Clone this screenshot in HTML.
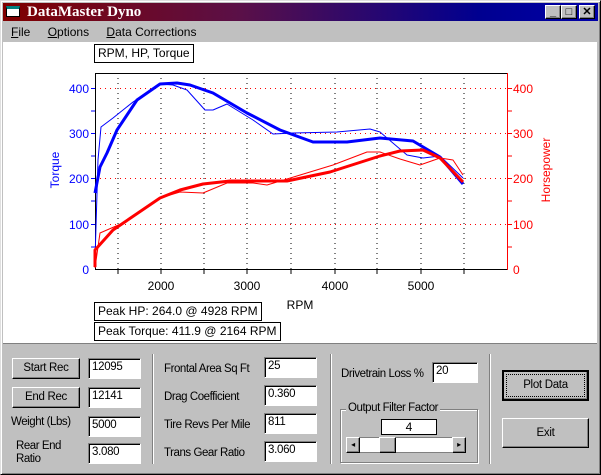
<!DOCTYPE html>
<html><head><style>
*{margin:0;padding:0;box-sizing:border-box}
body{width:601px;height:475px;background:#c0c0c0;font-family:"Liberation Sans",Arial,sans-serif;font-size:12px;position:relative;overflow:hidden}
.a{position:absolute}
.win{left:0;top:0;width:601px;height:475px;border:1px solid;border-color:#dfdfdf #000 #000 #dfdfdf;box-shadow:inset 1px 1px #fff,inset -1px -1px #808080}
.title{left:3px;top:3px;width:595px;height:18px;background:linear-gradient(90deg,#800000,#5a1048 40%,#000090 80%,#0000a8);color:#fff;font-family:"Liberation Serif",serif;font-weight:bold;font-size:15px;line-height:18px;padding-left:24px}
.tb{top:5px;width:16px;height:14px;background:#c0c0c0;border:1px solid;border-color:#fff #000 #000 #fff;box-shadow:inset -1px -1px #808080;font-size:11px;font-weight:bold;text-align:center;line-height:12px;color:#000}
.menu span{margin-right:14px}
.tx{background:#fff;border:1px solid;border-color:#808080 #fff #fff #808080;box-shadow:inset 1px 1px #000;font-size:11.5px;letter-spacing:-0.3px;padding:2px 0 0 3px;height:21px}
.btn{background:#c0c0c0;border:1px solid;border-color:#fff #000 #000 #fff;box-shadow:inset -1px -1px #808080;text-align:center;font-size:11.5px;letter-spacing:-0.3px}
.lbl{font-size:11.5px;letter-spacing:-0.45px;white-space:nowrap}
.vl{width:2px;border-left:1px solid #808080;border-right:1px solid #fff}
.box{border:1px solid #000;background:#fff;padding:0 3px;font-size:12px;line-height:17px}
</style></head><body>
<div class="a win"></div>
<div class="a title">DataMaster Dyno</div>
<div class="a" style="left:6px;top:6px;width:14px;height:11px;background:#fff;border:1px solid #000;border-top:3px solid #008080"></div>
<div class="a tb" style="left:545px">_</div>
<div class="a tb" style="left:561px">□</div>
<div class="a tb" style="left:579px">✕</div>
<div class="a menu" style="left:11px;top:25px;font-size:12px"><span><u>F</u>ile</span> <span><u>O</u>ptions</span> <span><u>D</u>ata Corrections</span></div>
<div class="a" style="left:3px;top:42px;width:594px;height:302px;background:#fff"></div>
<div class="a box" style="left:94px;top:44px">RPM, HP, Torque</div>
<svg class="a" style="left:0;top:0" width="601" height="345">
<g stroke="#000" stroke-dasharray="1,4" stroke-width="1">
<line x1="118" y1="73" x2="118" y2="269"/><line x1="161" y1="73" x2="161" y2="269"/><line x1="204" y1="73" x2="204" y2="269"/><line x1="247" y1="73" x2="247" y2="269"/><line x1="291" y1="73" x2="291" y2="269"/><line x1="335" y1="73" x2="335" y2="269"/><line x1="377" y1="73" x2="377" y2="269"/><line x1="421" y1="73" x2="421" y2="269"/><line x1="464" y1="73" x2="464" y2="269"/>
</g>
<g stroke="#f00" stroke-dasharray="1,4">
<line x1="95" y1="88.5" x2="507" y2="88.5"/><line x1="95" y1="133.5" x2="507" y2="133.5"/><line x1="95" y1="178.5" x2="507" y2="178.5"/><line x1="95" y1="224.5" x2="507" y2="224.5"/>
</g>
<rect x="95.5" y="73.5" width="412" height="196" fill="none" stroke="#000"/>
<line x1="507.5" y1="73" x2="507.5" y2="270" stroke="#f00"/>
<g stroke="#000"><line x1="118" y1="269" x2="118" y2="274"/><line x1="161" y1="269" x2="161" y2="274"/><line x1="204" y1="269" x2="204" y2="274"/><line x1="247" y1="269" x2="247" y2="274"/><line x1="291" y1="269" x2="291" y2="274"/><line x1="335" y1="269" x2="335" y2="274"/><line x1="377" y1="269" x2="377" y2="274"/><line x1="421" y1="269" x2="421" y2="274"/><line x1="464" y1="269" x2="464" y2="274"/></g>
<g stroke="#00f"><line x1="91" y1="88.5" x2="95" y2="88.5"/><line x1="91" y1="111" x2="95" y2="111"/><line x1="91" y1="133.5" x2="95" y2="133.5"/><line x1="91" y1="156" x2="95" y2="156"/><line x1="91" y1="178.5" x2="95" y2="178.5"/><line x1="91" y1="201" x2="95" y2="201"/><line x1="91" y1="224.5" x2="95" y2="224.5"/><line x1="91" y1="247" x2="95" y2="247"/></g>
<g stroke="#f00"><line x1="507" y1="88.5" x2="512" y2="88.5"/><line x1="507" y1="111" x2="512" y2="111"/><line x1="507" y1="133.5" x2="512" y2="133.5"/><line x1="507" y1="156" x2="512" y2="156"/><line x1="507" y1="178.5" x2="512" y2="178.5"/><line x1="507" y1="201" x2="512" y2="201"/><line x1="507" y1="224.5" x2="512" y2="224.5"/><line x1="507" y1="247" x2="512" y2="247"/></g>
<g fill="#00f" font-size="12" font-family="Liberation Sans" text-anchor="end"><text x="89" y="93">400</text><text x="89" y="138">300</text><text x="89" y="183">200</text><text x="89" y="229">100</text><text x="89" y="274">0</text></g>
<g fill="#f00" font-size="12" font-family="Liberation Sans"><text x="513" y="93">400</text><text x="513" y="138">300</text><text x="513" y="183">200</text><text x="513" y="229">100</text><text x="513" y="274">0</text></g>
<g font-size="12" font-family="Liberation Sans" text-anchor="middle"><text x="161" y="290">2000</text><text x="247" y="290">3000</text><text x="335" y="290">4000</text><text x="421" y="290">5000</text><text x="300" y="309">RPM</text></g>
<text transform="translate(59,170) rotate(-90)" fill="#00f" font-size="12" font-family="Liberation Sans" text-anchor="middle">Torque</text>
<text transform="translate(550,170) rotate(-90)" fill="#f00" font-size="12" font-family="Liberation Sans" text-anchor="middle">Horsepower</text>
<g fill="none" stroke-linejoin="round">
<polyline stroke="#00f" stroke-width="1" points="95,260 98,160 101,127 113,118 133,102 160,84 173,85 187,90 205,110 213,110 227,104 253,120 273,134 293,133 337,132 370,129 380,132 407,155 423,158 440,156 463,178"/>
<polyline stroke="#00f" stroke-width="3" points="95,193 100,167 107,153 117,130 137,100 160,84 177,83 190,85 213,93 247,113 280,130 313,142 347,142 380,138 413,141 440,157 463,184"/>
<polyline stroke="#f00" stroke-width="1" points="95,268 100,233 123,223 160,198 180,192 203,193 227,183 253,183 267,185 287,179 333,165 367,152 380,152 400,159 420,165 440,158 453,160 463,175"/>
<polyline stroke="#f00" stroke-width="3" points="95,267 95,250 113,230 160,198 180,190 203,184 230,181 287,181 330,172 380,156 400,151 423,150 440,158 463,182"/>
</g>
</svg>
<div class="a box" style="left:94px;top:302px">Peak HP: 264.0 @ 4928 RPM</div>
<div class="a box" style="left:94px;top:322px">Peak Torque: 411.9 @ 2164 RPM</div>
<div class="a" style="left:3px;top:343px;width:594px;height:1px;background:#808080"></div>

<div class="a btn" style="left:12px;top:358px;width:68px;height:21px;line-height:19px">Start Rec</div>
<div class="a btn" style="left:12px;top:387px;width:68px;height:21px;line-height:19px">End Rec</div>
<div class="a lbl" style="left:11px;top:416px">Weight (Lbs)</div>
<div class="a lbl" style="left:16px;top:440px;line-height:13px">Rear End<br>Ratio</div>
<div class="a tx" style="left:88px;top:358px;width:53px">12095</div>
<div class="a tx" style="left:88px;top:387px;width:53px">12141</div>
<div class="a tx" style="left:88px;top:416px;width:53px">5000</div>
<div class="a tx" style="left:88px;top:443px;width:53px">3.080</div>
<div class="a vl" style="left:152px;top:354px;height:110px"></div>
<div class="a lbl" style="left:164px;top:363px">Frontal Area Sq Ft</div>
<div class="a lbl" style="left:164px;top:391px">Drag Coefficient</div>
<div class="a lbl" style="left:164px;top:419px">Tire Revs Per Mile</div>
<div class="a lbl" style="left:164px;top:447px">Trans Gear Ratio</div>
<div class="a tx" style="left:264px;top:357px;width:53px">25</div>
<div class="a tx" style="left:264px;top:385px;width:53px">0.360</div>
<div class="a tx" style="left:264px;top:413px;width:53px">811</div>
<div class="a tx" style="left:264px;top:441px;width:53px">3.060</div>
<div class="a vl" style="left:330px;top:354px;height:110px"></div>
<div class="a lbl" style="left:341px;top:368px">Drivetrain Loss %</div>
<div class="a tx" style="left:432px;top:362px;width:46px">20</div>
<div class="a" style="left:340px;top:409px;width:138px;height:54px;border:1px solid #808080;box-shadow:1px 1px #fff,inset 1px 1px #fff"></div>
<div class="a lbl" style="left:346px;top:402px;background:#c0c0c0;padding:0 2px">Output Filter Factor</div>
<div class="a" style="left:381px;top:419px;width:56px;height:16px;background:#fff;border:1px solid #000;text-align:center;line-height:14px">4</div>
<div class="a" style="left:346px;top:437px;width:120px;height:16px;background:#fff;border:1px solid #808080"></div>
<div class="a btn" style="left:346px;top:437px;width:14px;height:16px;font-size:8px;line-height:14px">◂</div>
<div class="a btn" style="left:452px;top:437px;width:14px;height:16px;font-size:8px;line-height:14px">▸</div>
<div class="a btn" style="left:379px;top:437px;width:17px;height:16px"></div>
<div class="a vl" style="left:489px;top:354px;height:110px"></div>
<div class="a btn" style="left:502px;top:370px;width:87px;height:31px;border:2px solid #000;line-height:26px;outline:1px dotted #000;outline-offset:-5px">Plot Data</div>
<div class="a btn" style="left:502px;top:418px;width:87px;height:30px;line-height:28px">Exit</div>
</body></html>
